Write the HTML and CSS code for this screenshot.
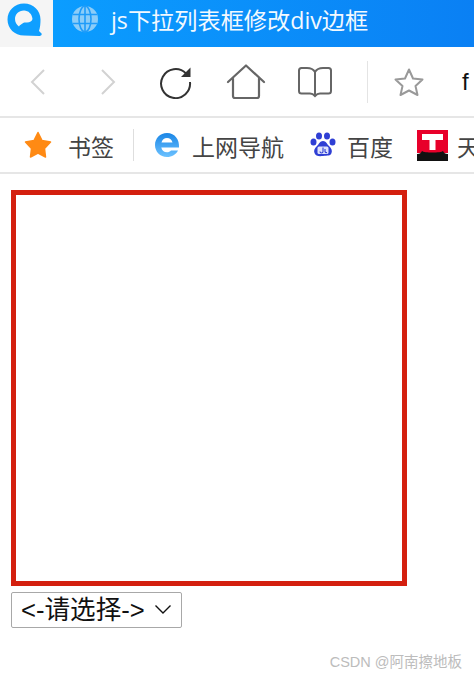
FILE: index.html
```html
<!DOCTYPE html>
<html lang="zh-CN">
<head>
<meta charset="utf-8">
<title>js下拉列表框修改div边框</title>
<link rel="stylesheet" href="styles.css">
</head>
<body>
<div class="tabbar">
  <div class="app-tile">
    <svg class="app-logo" viewBox="0 0 36 34" width="36" height="34"><path fill="#0f9fff" d="M17 0.500C7.500 0.500 0.500 7.500 0.500 16.500S7.500 32.500 17 32.500C22 32.500 27 33 32 33 35 33 35.500 30.500 33.500 29.500L32 28C33.200 24.500 33.500 20.500 33.500 16.500 33.500 7.500 26.500 0.500 17 0.500Z"/><path fill="#f5f5f5" d="M17 7.500C11.500 7.500 8 11.500 8 16 8 19 9.500 22 12 23.500 13 21.500 14.500 21.500 15.500 20.500 17 19 18 19.500 20 19.500 23 19.500 25 18 25.500 16 25 11 21.500 7.500 17 7.500Z"/></svg>
  </div>
  <div class="tab">
    <svg class="globe" viewBox="0 0 28 28" width="28" height="28"><circle cx="14" cy="14" r="13" fill="#8ccdf8"/><g fill="none" stroke="#1f9cf9" stroke-width="1.600"><ellipse cx="14" cy="14" rx="6" ry="13"/><path d="M14 1V27M2 9.500H26M2 18.500H26"/></g></svg>
    <span class="tab-title">js下拉列表框修改div边框</span>
  </div>
</div>
<div class="toolbar">
  <svg class="tool nav-prev" viewBox="0 0 18 28" width="18" height="28"><path d="M15 2 3 14l12 12" fill="none" stroke="#d2d2d2" stroke-width="2"/></svg>
  <svg class="tool nav-next" viewBox="0 0 18 28" width="18" height="28"><path d="M3 2l12 12L3 26" fill="none" stroke="#d2d2d2" stroke-width="2"/></svg>
  <svg class="tool reload" viewBox="0 0 34 34" width="34" height="34"><path d="M27 8.500A14.500 14.500 0 1 0 31 17" fill="none" stroke="#333" stroke-width="2"/><path d="M31.500 2.500V12H22Z" fill="#333"/></svg>
  <svg class="tool home" viewBox="0 0 40 36" width="40" height="36"><path d="M2 18 20 1.500 38 18M7 14.500V32a2 2 0 0 0 2 2H31a2 2 0 0 0 2-2V14.500" fill="none" stroke="#666" stroke-width="2.200" stroke-linejoin="round" stroke-linecap="round"/></svg>
  <svg class="tool book" viewBox="0 0 36 32" width="36" height="32"><path d="M18 6C16 2.500 13 2 10 2H4.500A2.500 2.500 0 0 0 2 4.500V25a2.500 2.500 0 0 0 2.500 2.500H13c2 0 3.500 .8 5 2.500 1.500-1.700 3-2.500 5-2.500H31.500A2.500 2.500 0 0 0 34 25V4.500A2.500 2.500 0 0 0 31.500 2H26c-3 0-6 .5-8 4ZM18 6V29" fill="none" stroke="#666" stroke-width="2"/></svg>
  <span class="tool-sep"></span>
  <svg class="tool star" viewBox="0 0 32 30" width="32" height="30"><path d="M16 2.500 20 11.500 29.500 12.500 22.500 19 24.500 28 16 23.500 7.500 28 9.500 19 2.500 12.500 12 11.500Z" fill="none" stroke="#999" stroke-width="2" stroke-linejoin="round"/></svg>
  <span class="addr">f</span>
</div>
<div class="bookmarks">
  <svg class="bm-star" viewBox="0 0 28 28" width="28" height="28"><path d="M14 1.500 18 9.500 26.500 11 20.500 17.500 21.500 26 14 22 6.500 26 7.500 17.500 1.500 11 10 9.500Z" fill="#ff8a14" stroke="#ff8a14" stroke-width="1.500" stroke-linejoin="round"/></svg>
  <span class="bm-label first">书签</span>
  <span class="bm-sep"></span>
  <svg class="bm-e" viewBox="0 0 26 26" width="26" height="26"><defs><linearGradient id="egrad" x1="0" y1="0" x2="0" y2="1"><stop offset="0" stop-color="#1a86e6"/><stop offset="1" stop-color="#6cc2ff"/></linearGradient></defs><path d="M13 1C6 1 1 6.500 1 13s5 12 12 12c5 0 9-2.500 11-6.500h-7c-1 1.200-2.300 1.800-4 1.800-3 0-5.200-1.800-5.700-4.800H25c.7-7.500-4-14.500-12-14.500ZM7.500 10.500C8 8 10.200 6 13 6s5 2 5.500 4.500Z" fill="url(#egrad)"/></svg>
  <span class="bm-label nav">上网导航</span>
  <svg class="bm-paw" viewBox="0 0 26 28" width="26" height="28"><g fill="#2f3fd4"><ellipse cx="9" cy="5" rx="3" ry="3.500"/><ellipse cx="17" cy="5" rx="3" ry="3.500"/><ellipse cx="3.500" cy="11" rx="3" ry="3.500"/><ellipse cx="22.500" cy="11" rx="3" ry="3.500"/><path d="M13 10c-3 0-4 3-6 5-2.500 2.500-3.500 4.500-2.500 7 1 3 4 3.500 8.500 3s7.500 0 8.500-3c1-2.500 0-4.500-2.500-7-2-2-3-5-6-5Z"/></g><rect x="7.500" y="15.500" width="11" height="7.500" rx="1.500" fill="#dfe3fb"/><path d="M10 20.500a1.500 1.500 0 1 0 3 0V16.500M15 18v2.500a1.500 1.500 0 0 0 2 1" fill="none" stroke="#2f3fd4" stroke-width="1.100"/></svg>
  <span class="bm-label baidu">百度</span>
  <svg class="bm-t" viewBox="0 0 31 31" width="31" height="31"><path fill="#e8002a" d="M0 0H31V23H0Z"/><path fill="#111" d="M0 24C3 24 4 23 5 21 7 23 24 23 26 21 27 23 28 24 31 24V31H0Z"/><path fill="#fff" d="M5 4H26V10H18.500V20H12.500V10H5Z"/></svg>
  <span class="bm-label last">天</span>
</div>
<main class="page">
  <div class="red-box"></div>
  <div class="picker-wrap">
    <select class="picker"><option>&lt;-请选择-&gt;</option></select>
    <svg class="picker-arrow" viewBox="0 0 16 9" width="16" height="9"><path d="M0.500 0.500 8 8 15.500 0.500" fill="none" stroke="#111" stroke-width="1.400"/></svg>
  </div>
</main>
<div class="watermark">CSDN @阿南擦地板</div>
</body>
</html>
```
FILE: styles.css
```css
html, body {
  margin: 0;
  padding: 0;
  background: #fff;
}
body {
  width: 474px;
  height: 675px;
  overflow: hidden;
  position: relative;
  font-family: "Liberation Sans", "Noto Sans CJK SC", sans-serif;
}
.tabbar {
  display: flex;
  height: 47px;
}
.app-tile {
  width: 53px;
  box-sizing: border-box;
  background: #f5f5f5;
  display: flex;
  align-items: flex-start;
  padding: 3px 0 0 7px;
}
.tab {
  flex: 1;
  display: flex;
  align-items: center;
  background: linear-gradient(90deg, #0b9dff, #0a80f4);
  padding: 0 0 10px 18px;
  gap: 12px;
  overflow: hidden;
}
.tab-title {
  color: #f2f9ff;
  font-size: 23.2px;
  white-space: nowrap;
  font-family: "Open Sans", "Noto Sans CJK SC", sans-serif;
}
.toolbar {
  display: flex;
  align-items: center;
  height: 69px;
  border-bottom: 2px solid #e6e6e6;
  overflow: hidden;
}
.nav-prev { margin-left: 29px; }
.nav-next { margin-left: 52px; }
.reload { margin-left: 42px; }
.home { margin-left: 33px; }
.book { margin-left: 31px; }
.tool-sep {
  width: 1px;
  height: 42px;
  background: #e4e4e4;
  margin-left: 34px;
}
.star { margin-left: 25px; }
.addr {
  margin-left: 37px;
  font-size: 24px;
  color: #111;
  font-family: "Liberation Sans", sans-serif;
}
.bookmarks {
  display: flex;
  align-items: center;
  height: 54px;
  border-bottom: 2px solid #e6e6e6;
  overflow: hidden;
  white-space: nowrap;
}
.bm-star { margin-left: 24px; flex: none; }
.bm-label {
  font-size: 23px;
  color: #444;
  flex: none;
  padding-top: 2px;
}
.bm-label.first { margin-left: 16px; }
.bm-sep {
  width: 1px;
  height: 32px;
  background: #dedede;
  margin-left: 19px;
  flex: none;
}
.bm-e { margin-left: 20px; flex: none; }
.bm-label.nav { margin-left: 12px; }
.bm-paw { margin-left: 26px; flex: none; }
.bm-label.baidu { margin-left: 11px; }
.bm-t { margin-left: 24px; flex: none; }
.bm-label.last { margin-left: 9px; }
.page {
  padding: 16px 11px 0;
}
.red-box {
  box-sizing: border-box;
  width: 396px;
  height: 396px;
  border: 5px solid #d4200f;
}
.picker-wrap {
  position: relative;
  width: 171px;
  height: 36px;
  margin-top: 6px;
}
.picker {
  display: block;
  box-sizing: border-box;
  width: 100%;
  height: 100%;
  padding: 0 0 0 9px;
  appearance: none;
  font-size: 25.6px;
  font-family: "Liberation Sans", "Noto Sans CJK SC", sans-serif;
  color: #111;
  background: #fff;
  border: 1px solid #a8a8a8;
  border-radius: 2px;
}
.picker-arrow {
  position: absolute;
  left: 144px;
  top: 13px;
  pointer-events: none;
}
.watermark {
  position: absolute;
  right: 12px;
  top: 650px;
  font-size: 14.500px;
  color: #bcbcbc;
  white-space: nowrap;
}
```
